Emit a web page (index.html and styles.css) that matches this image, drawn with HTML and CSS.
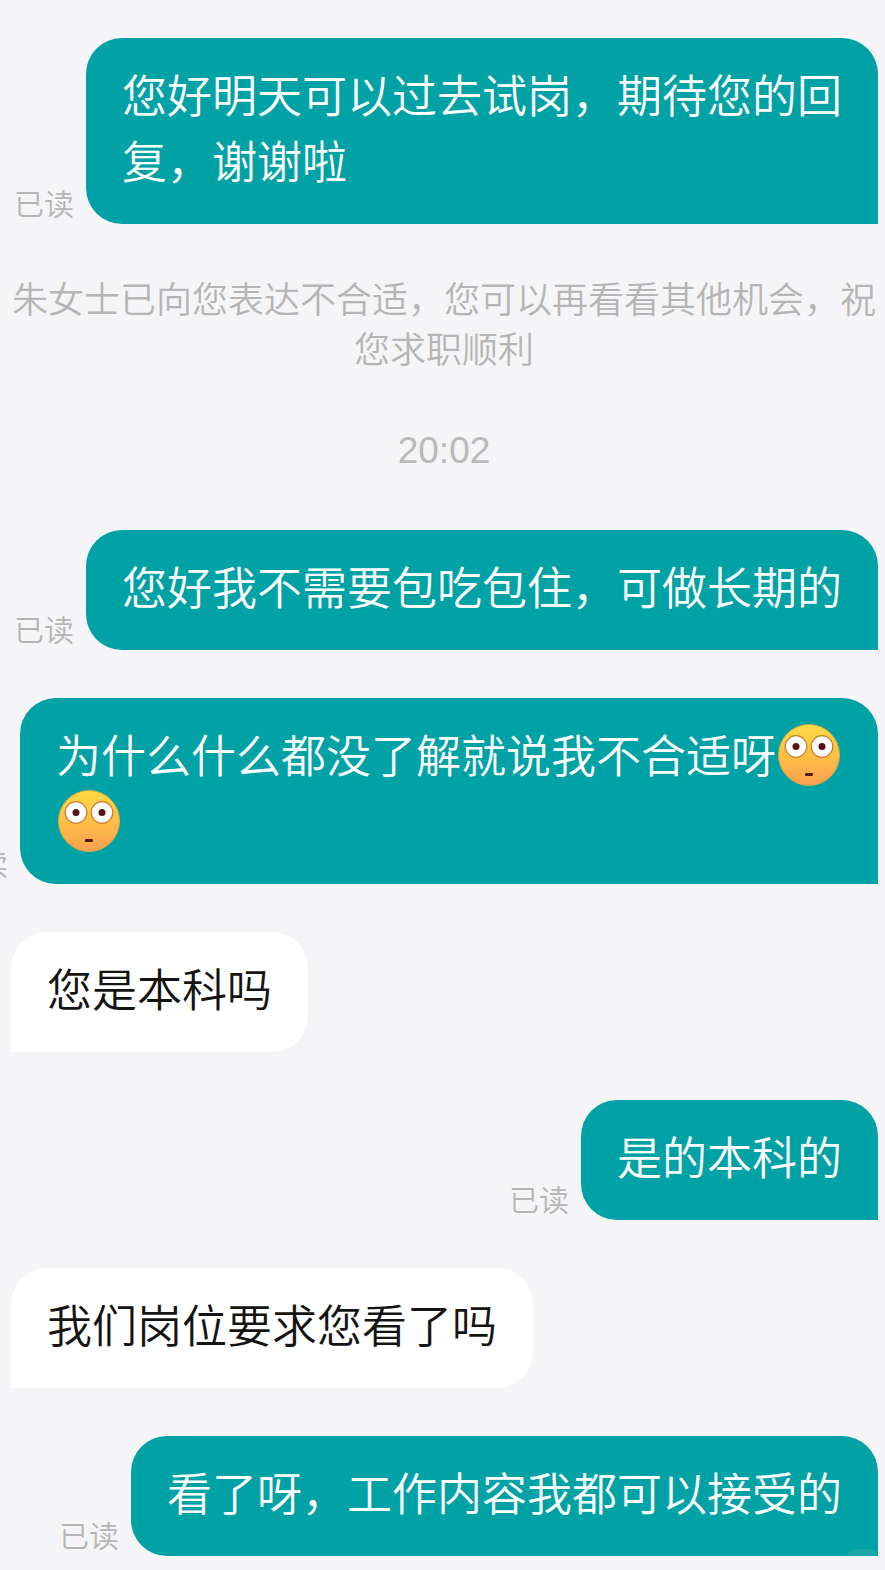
FILE: index.html
```html
<!DOCTYPE html>
<html lang="zh-CN">
<head>
<meta charset="utf-8">
<meta name="viewport" content="width=device-width, initial-scale=1">
<title>聊天</title>
<link rel="stylesheet" href="styles.css">
</head>
<body>
<svg class="defs" width="0" height="0" aria-hidden="true">
  <defs>
    <linearGradient id="face" x1="0" y1="0" x2="0" y2="1">
      <stop offset="0" stop-color="#fddb48"/>
      <stop offset="0.5" stop-color="#fdc045"/>
      <stop offset="1" stop-color="#fb9f52"/>
    </linearGradient>
    <symbol id="stare" viewBox="0 0 62 62">
      <circle cx="31" cy="31" r="30.5" fill="url(#face)" stroke="#dda63a" stroke-width="1"/>
      <circle cx="18" cy="22.500" r="10.800" fill="#fff" stroke="#cf7a2b" stroke-width="1.200"/>
      <circle cx="44" cy="22.500" r="10.800" fill="#fff" stroke="#cf7a2b" stroke-width="1.200"/>
      <circle cx="18" cy="22.500" r="3.500" fill="#571313"/>
      <circle cx="44" cy="22.500" r="3.500" fill="#571313"/>
      <rect x="27" y="49" width="8" height="3" rx="1.200" fill="#571313"/>
    </symbol>
  </defs>
</svg>
<main class="chat">
  <div class="row sent">
    <span class="status">已读</span>
    <p class="bubble">您好明天可以过去试岗，期待您的回<br>复，谢谢啦</p>
  </div>
  <p class="notice">朱女士已向您表达不合适，您可以再看看其他机会，祝您求职顺利</p>
  <time class="time" datetime="20:02">20:02</time>
  <div class="row sent">
    <span class="status">已读</span>
    <p class="bubble">您好我不需要包吃包住，可做长期的</p>
  </div>
  <div class="row sent">
    <span class="status">已读</span>
    <p class="bubble">为什么什么都没了解就说我不合适呀<svg class="emoji" role="img" aria-label="瞪眼"><use href="#stare"/></svg><br><svg class="emoji" role="img" aria-label="瞪眼"><use href="#stare"/></svg></p>
  </div>
  <div class="row received">
    <p class="bubble">您是本科吗</p>
  </div>
  <div class="row sent">
    <span class="status">已读</span>
    <p class="bubble">是的本科的</p>
  </div>
  <div class="row received">
    <p class="bubble">我们岗位要求您看了吗</p>
  </div>
  <div class="row sent">
    <span class="status">已读</span>
    <p class="bubble tagged">看了呀，工作内容我都可以接受的</p>
  </div>
</main>
</body>
</html>
```
FILE: styles.css
```css
* {
  box-sizing: border-box;
}

body {
  margin: 0;
  background: #f5f5f7;
  color: #141414;
  font-family: "Noto Sans CJK SC", sans-serif;
  font-weight: 350;
}

p {
  margin: 0;
}

.defs {
  position: absolute;
}

.chat {
  display: flex;
  flex-direction: column;
  gap: 48px;
  padding: 38px 0 14px;
  overflow: hidden;
}

.row {
  display: flex;
  align-items: flex-end;
  gap: 12px;
}

.sent {
  justify-content: flex-end;
  padding-right: 7px;
}

.received {
  padding-left: 11px;
}

.bubble {
  flex: none;
  padding: 23px 36px 31px;
  border-radius: 36px;
  font-size: 45px;
  line-height: 66px;
}

.sent .bubble {
  background: #00a2a6;
  color: #fff;
  border-bottom-right-radius: 0;
}

.received .bubble {
  background: #fff;
  border-bottom-left-radius: 0;
}

.status {
  flex: none;
  color: #b5b5b5;
  font-size: 30px;
  line-height: 44px;
}

.notice {
  color: #b5b5b5;
  font-size: 36px;
  line-height: 50px;
  padding: 0 8px 0 11px;
  text-align: center;
}

.time {
  color: #bababa;
  font-family: "Liberation Sans", sans-serif;
  font-size: 37px;
  font-weight: 400;
  line-height: 62px;
  padding: 0 8px 0 11px;
  text-align: center;
}

.emoji {
  width: 62px;
  height: 62px;
  margin: 3px 2px 1px;
  vertical-align: top;
}

.tagged {
  position: relative;
  overflow: hidden;
}

.tagged::after {
  content: "";
  position: absolute;
  right: 0;
  bottom: 0;
  width: 30px;
  height: 7px;
  border-radius: 7px 7px 0 0;
  background: #1aa5a8;
}
```
